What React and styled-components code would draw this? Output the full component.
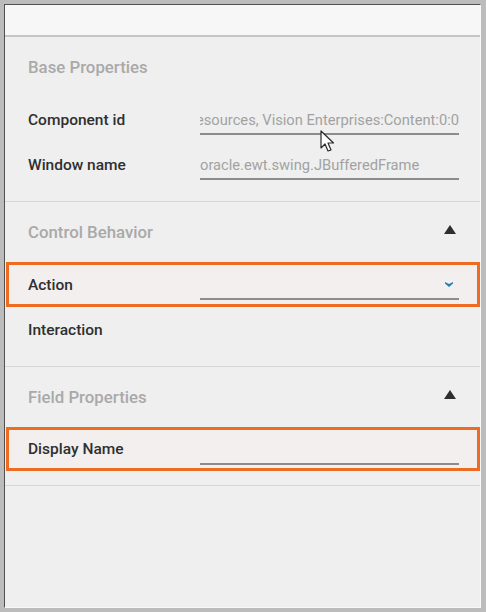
import React from 'react';
import styled, { createGlobalStyle } from 'styled-components';

const GlobalStyle = createGlobalStyle`
  html, body {
    margin: 0;
    padding: 0;
    background: #bcbcbc;
  }
  body {
    font-family: Roboto, 'Liberation Sans', Arial, sans-serif;
  }
`;

// **** data for the sections
const sections = [
  {
    title: 'Base Properties',
    collapsible: false,
    rows: [
      { label: 'Component id', value: 'Resources, Vision Enterprises:Content:0:0', clipped: true },
      { label: 'Window name', value: 'oracle.ewt.swing.JBufferedFrame' },
    ],
  },
  {
    title: 'Control Behavior',
    collapsible: true,
    rows: [
      { label: 'Action', select: true, highlight: true },
      { label: 'Interaction', empty: true },
    ],
  },
  {
    title: 'Field Properties',
    collapsible: true,
    rows: [{ label: 'Display Name', value: '', highlight: true, short: true }],
  },
];

const Caret = () => (
  <svg width='12' height='9' viewBox='0 0 12 9'>
    <polygon points='6,0 12,9 0,9' fill='#2e2e2e' />
  </svg>
);

const Chevron = () => (
  <svg width='8' height='5' viewBox='0 0 8 5'>
    <polygon points='0,0 4,2 8,0 8,1.5 4,5 0,1.5' fill='#1f7fb6' />
  </svg>
);

const Cursor = () => (
  <svg width='16' height='24' viewBox='0 0 16 24'>
    <path
      d='M1 1 L1 18 L5 14 L8 21 L11 20 L8 13 L13.5 13 Z'
      fill='#ffffff'
      stroke='#2a2a2a'
      strokeWidth='1.2'
      strokeLinejoin='round'
    />
  </svg>
);

const App = () => {
  return (
    <>
      <GlobalStyle />
      <Panel>
        <TopBar />
        {sections.map((section) => (
          <Section key={section.title}>
            <SectionHead>
              <SectionTitle>{section.title}</SectionTitle>
              {section.collapsible && <Caret />}
            </SectionHead>
            {section.rows.map((row) => (
              <Row key={row.label} $highlight={row.highlight} $short={row.short}>
                <Label>{row.label}</Label>
                {!row.empty && (
                  <Field $clipped={row.clipped}>
                    <Value>{row.value}</Value>
                    {row.select && <Chevron />}
                  </Field>
                )}
              </Row>
            ))}
          </Section>
        ))}
        <Pointer>
          <Cursor />
        </Pointer>
      </Panel>
    </>
  );
};

// Styled Components
const Panel = styled.div`
  position: relative;
  box-sizing: border-box;
  margin: 4px 5px 4px 4px;
  height: 604px;
  background: #efefef;
  border-top: 1px solid #505050;
  border-left: 1px solid #505050;
  border-right: 1px solid #f8f8f8;
  border-bottom: 1px solid #f8f8f8;
  overflow: hidden;
`;

const TopBar = styled.div`
  height: 30px;
  background: #f7f7f7;
  border-bottom: 2px solid #c6c6c6;
`;

const Section = styled.section`
  padding-bottom: 14px;
  border-bottom: 1px solid #d6d6d6;
`;

const SectionHead = styled.div`
  height: 60px;
  display: flex;
  align-items: center;
  justify-content: space-between;
  padding: 0 24px 0 23px;
  svg {
    margin-top: -5px;
  }
`;

const SectionTitle = styled.h3`
  margin: 0;
  font-size: 16.8px;
  font-weight: 500;
  color: #a9a9a9;
`;

const Row = styled.div`
  position: relative;
  box-sizing: border-box;
  height: ${(p) => (p.$short ? '44px' : '45px')};
  margin-left: 1px;
  display: grid;
  grid-template-columns: 172px 259px;
  align-items: center;
  padding-left: 22px;
  box-shadow: ${(p) => (p.$highlight ? 'inset 0 0 0 3px #ee6c22' : 'none')};
  background: ${(p) => (p.$highlight ? '#f2efee' : 'transparent')};
`;

const Label = styled.span`
  font-size: 15.5px;
  font-weight: 500;
  color: #2f2f2f;
`;

const Field = styled.div`
  position: relative;
  height: 100%;
  display: flex;
  align-items: center;
  justify-content: ${(p) => (p.$clipped ? 'flex-end' : 'flex-start')};
  overflow: hidden;
  svg {
    position: absolute;
    right: 6px;
    top: 20px;
  }
  &::after {
    content: '';
    position: absolute;
    left: 0;
    right: 0;
    top: 36px;
    height: 2px;
    background: #8c8c8c;
  }
`;

const Value = styled.span`
  white-space: nowrap;
  flex-shrink: 0;
  font-size: 14.7px;
  color: #a2a2a2;
`;

const Pointer = styled.div`
  position: absolute;
  left: 315px;
  top: 125px;
  pointer-events: none;
`;

export default App;
